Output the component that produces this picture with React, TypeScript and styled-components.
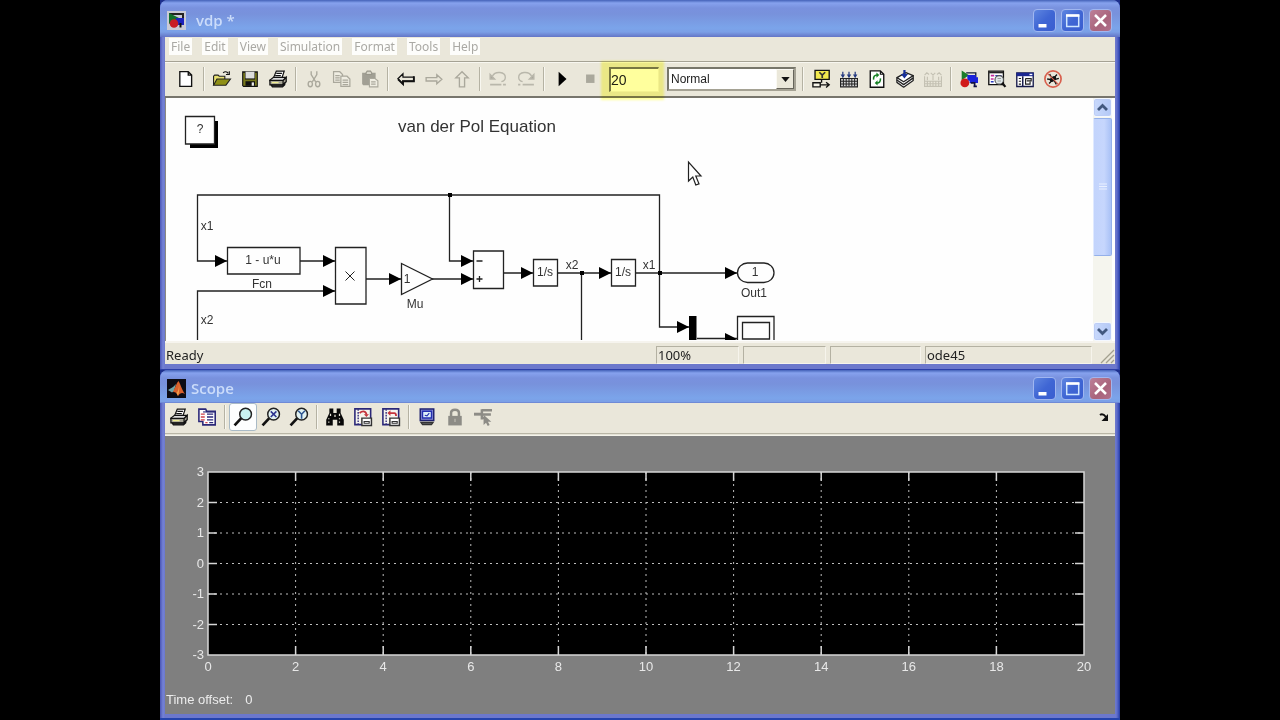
import React from "react";
import styled, { createGlobalStyle, css } from "styled-components";

const ui = `"Noto Sans", "Open Sans", sans-serif`;
const arial = `"Liberation Sans", Arial, sans-serif`;

const Global = createGlobalStyle`
  * { box-sizing: border-box; }
  body { margin: 0; background: #000; font-family: ${ui}; font-size: 12px; color: #222; }
  button, input, select { font: inherit; color: inherit; margin: 0; }
`;

const Desktop = styled.main`
  width: 75%;
  min-height: 100vh;
  margin: 0 auto;
  display: flex;
  flex-direction: column;
  background: #1c2f8c;
`;

const Frame = styled.section<{ $grow?: boolean }>`
  display: flex;
  flex-direction: column;
  padding: 0 5px 5px;
  border-radius: 8px 8px 0 0;
  background: linear-gradient(90deg, #4a55b4 0, #7482d6 3px, #6c78cc 5px, #6c78cc calc(100% - 4px), #4a5cc4 calc(100% - 2px), #22399c 100%);
  border-bottom: 1px solid #2c3fa8;
  ${(p) => p.$grow && css`flex: 1; padding-bottom: 4px; border-bottom: 3px solid #2443ac;`}
`;

const TitleBar = styled.header<{ $h: number; $gap: number }>`
  height: ${(p) => p.$h}px;
  margin: 0 -5px;
  padding: 3px 8px 0 7px;
  display: flex;
  align-items: center;
  gap: ${(p) => p.$gap}px;
  border-radius: 8px 8px 0 0;
  background: linear-gradient(180deg, #4462b8 0, #86a2ee 3px, #7991de 8px, #7892dc 14px, #7ba4ea 28px, #7b9fe6 32px, #6375c6 100%);
`;

const AppMark = styled.svg`
  width: 19px;
  height: 19px;
  flex: none;
`;

const Title = styled.h1`
  flex: 1;
  margin: 0;
  font: 600 15px/20px "Open Sans", ${ui};
  color: #cbdcfa;
`;

const WindowButtons = styled.div`
  display: flex;
  gap: 5px;
`;

const WindowButton = styled.button<{ $close?: boolean }>`
  width: 23px;
  height: 23px;
  padding: 0;
  display: grid;
  place-items: center;
  border: 1px solid #a0b6f0;
  border-radius: 4px;
  background: ${(p) =>
    p.$close
      ? "linear-gradient(135deg, #bd8098, #a9647c 60%, #b0708c)"
      : "linear-gradient(135deg, #5f86e0, #3f66d4 50%, #3a5ed0)"};
  svg { width: 21px; height: 21px; }
`;

const MenuBar = styled.nav`
  height: 24px;
  padding: 1px 4px 0;
  display: flex;
  align-items: flex-start;
  gap: 10px;
  background: #eae7da;
`;

const MenuItem = styled.button`
  height: 17px;
  padding: 0 2px;
  border: 0;
  background: #fdfdfb;
  color: #aaa9a4;
  font-size: 12px;
  line-height: 17px;
`;

const ToolBar = styled.div<{ $h: number; $pad: number }>`
  height: ${(p) => p.$h}px;
  padding: 0 ${(p) => p.$pad}px;
  display: flex;
  align-items: center;
  background: #eae7da;
`;

const ModelTools = styled(ToolBar)`
  border-top: 1px solid #a5a294;
  border-bottom: 2px solid #77756c;
  box-shadow: inset 0 1px 0 #f8f7f0;
`;

const ScopeTools = styled(ToolBar)`
  padding-bottom: 4px;
  border-bottom: 1px solid #f4f3ea;
  box-shadow: inset 0 -1px 0 #e4e2d6, inset 0 -2px 0 #b9b6a6;
`;

const ToolButton = styled.button<{ $pressed?: boolean }>`
  width: 28px;
  height: 28px;
  flex: none;
  padding: 0;
  display: grid;
  place-items: center;
  border: 0;
  background: none;
  svg { width: 18px; height: 18px; overflow: visible; }
  ${(p) =>
    p.$pressed &&
    css`
      background: #fdfefe;
      border: 1px solid #a9bac6;
      border-radius: 3px;
    `}
`;

const Separator = styled.span`
  width: 2px;
  height: 24px;
  flex: none;
  margin: 0 3px;
  border-left: 1px solid #b5b2a3;
  border-right: 1px solid #f8f7f0;
`;

const Spacer = styled.span`
  flex: 1;
`;

const StopTime = styled.label`
  position: relative;
  margin: 0 8px 0 5px;
  display: block;
  &::after {
    content: "";
    position: absolute;
    inset: -6px -5px -8px -8px;
    background: rgba(255, 255, 60, 0.5);
    mix-blend-mode: multiply;
    pointer-events: none;
    filter: blur(1px);
  }
`;

const StopInput = styled.input`
  display: block;
  width: 50px;
  height: 25px;
  padding: 0;
  border: 2px solid #77766a;
  border-right: 1px solid #f4f2e8;
  border-bottom: 1px solid #f4f2e8;
  background: #fff;
  font-family: ${arial};
  font-size: 14px;
`;

const ModeField = styled.label`
  position: relative;
  display: block;
  margin-right: 3px;
`;

const ModeSelect = styled.select`
  display: block;
  width: 129px;
  height: 24px;
  padding: 0 2px;
  appearance: none;
  border: 2px solid #77766a;
  border-right-color: #a5a294;
  border-bottom-color: #a5a294;
  border-radius: 0;
  background: #fff;
  font-family: ${arial};
  font-size: 12px;
`;

const SelectArrow = styled.span`
  position: absolute;
  top: 2px;
  right: 2px;
  bottom: 2px;
  width: 18px;
  display: grid;
  place-items: center;
  background: #ebe8da;
  border: 1px solid #fbfaf4;
  border-right-color: #66645a;
  border-bottom-color: #66645a;
  pointer-events: none;
  svg { width: 9px; height: 5px; }
`;

const Canvas = styled.div`
  display: flex;
  justify-content: space-between;
  height: 243px;
  overflow: hidden;
  background: #fefefe;
  border-left: 1px solid #8c8a80;
`;

const Diagram = styled.svg`
  width: 640px;
  height: 242px;
  flex: none;
  font-family: ${arial};
  font-size: 12px;
  stroke: none;
  fill: #333;
`;

const ScrollTrack = styled.div`
  width: 19px;
  margin-right: 3px;
  display: flex;
  flex-direction: column;
  background: #f5f5ee;
`;

const ScrollButton = styled.button`
  height: 19px;
  flex: none;
  padding: 0;
  display: grid;
  place-items: center;
  border: 1px solid #f4f8ff;
  border-radius: 3px;
  background: linear-gradient(90deg, #c9d9fc, #b3c8f6);
  box-shadow: inset 0 0 0 1px #bccdf6;
  svg { width: 13px; height: 9px; }
`;

const ScrollThumb = styled.div`
  height: 138px;
  margin: 1px 0 auto;
  display: grid;
  place-items: center;
  border: 1px solid #94b0ea;
  border-left-color: #dfe9ff;
  border-radius: 2px;
  background: linear-gradient(90deg, #c3d4fc, #c6d6fd 60%, #a9c1f6);
  svg { width: 8px; height: 8px; }
`;

const StatusBar = styled.footer`
  height: 23px;
  display: flex;
  align-items: stretch;
  gap: 4px;
  background: #eae7da;
  border-top: 2px solid #f6f4ee;
  font-size: 13px;
  line-height: 24px;
`;

const StatusText = styled.span`
  flex: 1;
  padding-left: 1px;
`;

const StatusPanel = styled.span<{ $w: number }>`
  width: ${(p) => p.$w}px;
  margin-top: 3px;
  padding-left: 1px;
  line-height: 16px;
  border: 1px solid #b4b1a2;
  border-right-color: #f6f4ec;
  border-bottom-color: #f6f4ec;
`;

const Grip = styled.svg`
  width: 19px;
  height: 21px;
`;

const ScopeBody = styled.div`
  flex: 1;
  display: flex;
  flex-direction: column;
  padding: 36px 31px 0 43px;
  background: #7f7f7f;
`;

const Plot = styled.svg`
  display: block;
  width: 100%;
  flex: 1;
  min-height: 183px;
  overflow: visible;
  font-family: ${arial};
  font-size: 13px;
  fill: #e8e8e8;
`;

const TimeOffset = styled.p`
  margin: 36px 0 0 -42px;
  padding-bottom: 6px;
  display: flex;
  gap: 12px;
  font-family: ${arial};
  font-size: 13px;
  line-height: 17px;
  color: #ececec;
`;

const ExpandArrow = styled.button`
  width: 18px;
  height: 18px;
  padding: 0;
  border: 0;
  background: none;
  svg { display: block; width: 18px; height: 18px; }
`;

const GREY = "#aaa89c";

const icons: Record<string, React.ReactNode> = {
  new: <path d="M2.500 1.500h7.500l3 3v10H2.500z M10 1.500v3h3" fill="#fff" stroke="#111" strokeWidth="1.200" />,
  open: (
    <g strokeWidth="1">
      <path d="M.5 13.500V5.500l1-1h3l1 1h5v3" fill="#e8e070" stroke="#222" />
      <path d="M.5 13.500l3-5.500h12l-4 5.500z" fill="#8f9016" stroke="#222" />
      <path d="M9 2.500c1.500-1.500 3.500-1.200 4.500.5M14.500 1v3h-3" fill="none" stroke="#111" />
    </g>
  ),
  save: (
    <g>
      <path d="M1 1h14v14H2l-1-1z" fill="#111" />
      <path d="M2 2.500h1.500v6h9v-6H14V14H2z" fill="#77781c" />
      <path d="M4 1.500h8v6H4z" fill="#ddd" />
      <path d="M4 10h8.500v4H4z" fill="#111" />
      <path d="M9.500 11h2v3h-2z" fill="#eee" />
    </g>
  ),
  print: (
    <g stroke="#111" strokeWidth="1.100">
      <path d="M4 7l2.500-6h7L11.500 7z" fill="#fff" />
      <path d="M6.500 3h5M5.500 5h5" fill="none" />
      <path d="M.8 9L4 6.500h11L12.500 9.500H.8z" fill="#ddd" />
      <path d="M.8 9.200h11.700v4H.8zM12.500 9.500L15.300 6.500v4l-2.800 2.700z" fill="#a7a596" />
      <path d="M2 13.500h10l2-2v1.500l-2 2H3z" fill="#555" />
      <path d="M2.500 11.200h6" stroke="#f0ee90" />
    </g>
  ),
  cut: (
    <g fill="none" stroke={GREY} strokeWidth="1.200">
      <path d="M5.500 1v3l4 6.500M10.500 1v3l-4 6.500" />
      <ellipse cx="4.700" cy="12.500" rx="1.900" ry="2.400" />
      <ellipse cx="11.300" cy="12.500" rx="1.900" ry="2.400" />
    </g>
  ),
  copy: (
    <g fill="#efede2" stroke={GREY} strokeWidth="1.100">
      <path d="M.5 1.500h5.500l2.500 2.500v7H.5z" />
      <path d="M2 5h4M2 7h4M2 9h4" />
      <path d="M7 5.500h5.500l2.500 2.500v6.500H7z" />
      <path d="M8.500 9h5M8.500 11h5M8.500 13h5" />
    </g>
  ),
  paste: (
    <g>
      <path d="M1 2.500h12v11H2l-1-1z" fill="#a19f94" />
      <path d="M4.500 2.500l1-1.500h3l1 1.500v1.500h-5z" fill="#d8d6ca" stroke="#98968a" />
      <path d="M7.500 7.500h5l2.500 2v5.500H7.500z" fill="#efede2" stroke={GREY} />
      <path d="M9 10.500h4M9 12.500h4" stroke={GREY} />
    </g>
  ),
  back: (
    <g fill="none" stroke="#111">
      <path d="M.8 7.800L5.300 3.300V6.300H14.800V9.800H5.300V12.300z" strokeWidth="1.100" />
      <path d="M1 8.300l4.300 4.200V10H15V5.500" strokeWidth="1.700" />
    </g>
  ),
  forward: <path d="M15 8.300l-4.500-4v2.500H1v3h9.500v2.500z" fill="none" stroke={GREY} strokeWidth="1.200" />,
  up: <path d="M8 1.500L2.500 7h3.200v8h4.600V7h3.200z" fill="none" stroke={GREY} strokeWidth="1.200" />,
  undo: (
    <g fill="none" stroke="#b9b7ab" strokeWidth="1.200">
      <path d="M3 5.500c2.500-5 11.500-4 11.500 1 0 2.200-1.500 3.500-3.500 3.800" />
      <path d="M1 4v4h4z" fill={GREY} />
      <path d="M1 13h10M12.500 13h2.500" strokeWidth="1.500" />
    </g>
  ),
  redo: (
    <g fill="none" stroke="#b9b7ab" strokeWidth="1.200">
      <path d="M13 5.500C10.500.5 1.500 1.500 1.500 6.500c0 2.200 1.500 3.500 3.500 3.800" />
      <path d="M15 4v4h-4z" fill={GREY} />
      <path d="M1 13h2M5 13h10" strokeWidth="1.500" />
    </g>
  ),
  play: <path d="M5 1.500L12 8 5 14.500z" fill="#000" />,
  stop: <path d="M4.500 4h7.500v7.500H4.500z" fill={GREY} />,
  signal: (
    <g stroke="#111" strokeWidth="1.200">
      <path d="M2.700 .3h12.600v8H2.700z" fill="#f2e94e" />
      <path d="M6.500 2l2.600 2.500L11.700 2M9.100 4.500v2.700" fill="none" stroke="#333" strokeWidth="1.500" />
      <path d="M.8 11.300h6.500v3.700H.8z" fill="#f5f3e8" />
      <path d="M7.300 13.200h7.500M8.500 8.500v2.800M12.500 10.800L15.300 13.200l-2.800 2.300" fill="none" />
    </g>
  ),
  grid: (
    <g stroke="#222" fill="none">
      <path d="M.5 7.500h15v7.500H.5z" fill="#d5d5d5" />
      <path d="M.5 10h15M.5 12.500h15M3 7.500v7M5.500 7.500v7M8 7.500v7M10.500 7.500v7M13 7.500v7" strokeWidth=".9" />
      <path d="M2.500 1.500v5M8 1.500v5M13.500 1.500v5" stroke="#263b80" strokeWidth="1.100" />
      <path d="M.5 4h4L2.500 7zM6 4h4L8 7zM11.500 4h4L13.500 7z" fill="#263b80" stroke="none" />
    </g>
  ),
  refresh: (
    <g>
      <path d="M2 .8h9l3 3v11.500H2z" fill="#fff" stroke="#111" strokeWidth="1.200" />
      <path d="M11 .8v3h3" fill="none" stroke="#111" />
      <path d="M5 8.500c-.4-2.500.8-4 3-4M11 7.500c.4 2.500-.8 4-3 4" fill="none" stroke="#158022" strokeWidth="1.400" />
      <path d="M7.500 2.200v4.600L10 4.500zM8.500 9.200v4.600L6 11.500z" fill="#158022" />
    </g>
  ),
  layers: (
    <g stroke="#222" strokeWidth="1.100" strokeLinejoin="round">
      <path d="M.8 11l6 4.300 8.500-6V7.500L.8 9z" fill="#fff" />
      <path d="M.8 8.800l6 4.200 8.500-6V5L.8 7z" fill="#fff" />
      <path d="M.8 6.800l8-4.500L15.300 5 6.800 10.500z" fill="#fff" />
      <path d="M7.500 0v4" stroke="#18309a" strokeWidth="2" />
      <path d="M4.300 3.500h6.400L7.500 7.500z" fill="#18309a" stroke="none" />
    </g>
  ),
  gridOff: (
    <g stroke="#c4c1b3" fill="none">
      <path d="M.5 4.500l2-2 2 1.500M6 2.500l2 2 2-2M11.500 4l2-1.500 2 2M3 6v3M8 5v4M13 6v3" />
      <path d="M.5 5.500v9h15v-9M.5 10h15M.5 12.200h15M3 9.500v5M5.500 9.500v5M8 9.500v5M10.500 9.500v5M13 9.500v5" />
    </g>
  ),
  library: (
    <g>
      <path d="M5.500 2.500H14v5" fill="none" stroke="#14203a" strokeWidth="1.200" />
      <path d="M1.500 .5l6.500 4.200-6.500 4.300z" fill="#1b7d2b" />
      <path d="M6.500 4.500h7.500V6.500h2v5H8.500V9.500h-2z" fill="#1a22dc" />
      <circle cx="4.300" cy="11.500" r="3.900" fill="#d01a1a" />
      <path d="M9.500 11.500h3.500v3.500M12 14.500h3" fill="none" stroke="#114" strokeWidth="1.500" />
    </g>
  ),
  explorer: (
    <g fill="none">
      <path d="M.7 1h13v12H.7z" fill="#fff" stroke="#111" strokeWidth="1.200" />
      <path d="M1 2.200h12.500" stroke="#222" strokeWidth="1.500" />
      <path d="M2.500 5h3M2.500 8h2.500" stroke="#c22c9c" strokeWidth="1.500" />
      <path d="M6.500 5h5.500M2.500 10.500h2.500" stroke="#2c3dc0" strokeWidth="1.300" />
      <circle cx="10" cy="8.800" r="3.800" fill="#dfe9ea" stroke="#555" />
      <path d="M8.500 7.500h3M8.500 9.800h3" stroke="#999" />
      <path d="M12.600 11.600l2.900 3.400" stroke="#111" strokeWidth="2" />
    </g>
  ),
  browser: (
    <g fill="none">
      <path d="M.7 2.700h14.600v12H.7z" fill="#fff" stroke="#161a4a" strokeWidth="1.200" />
      <path d="M.5 2.500h15v3H.5z" fill="#1b2792" />
      <path d="M12 4h2.500" stroke="#fff" strokeWidth="1.200" />
      <path d="M6 5.500v9" stroke="#161a4a" strokeWidth="1.300" />
      <path d="M2.500 7.500h2M2.500 10h2M2.500 12.500h2M8.500 7.500v5.500M8.500 7.700h5v2h-4M9 12.500h3.500v-2" stroke="#222" />
    </g>
  ),
  debug: (
    <g fill="none">
      <path d="M5 3.500l1.500 3M11.500 4l-2.500 3M2.800 8l4 .5M13.200 7.500l-4 1M4.500 12l3-3M11 12.800l-2-3.500" stroke="#111" strokeWidth="1.200" />
      <ellipse cx="8" cy="8" rx="2" ry="3.200" fill="#111" transform="rotate(50 8 8)" />
      <circle cx="8" cy="8" r="7.200" stroke="#d8604e" strokeWidth="1.500" />
      <path d="M3 3l10 10" stroke="#d8604e" strokeWidth="1" />
    </g>
  ),
  params: (
    <g fill="none">
      <path d="M.8 1h6l1 2h7.500v12h-11V12h-3.500z" fill="#fff" stroke="#2b2878" strokeWidth="1.400" />
      <path d="M4.500 3.500h10.500" stroke="#2b2878" />
      <path d="M2.500 5.500h3.500M2.500 8h3.500M2.500 10.500h3.500M6.500 13h2" stroke="#d0424a" strokeWidth="1.200" />
      <path d="M8 5.500h5.500M8 8h5.500M8 10.500h5.500M10 13h3.500" stroke="#2b2878" strokeWidth="1.200" />
    </g>
  ),
  zoom: (
    <g>
      <path d="M6.500 9L.5 15.500" stroke="#111" strokeWidth="2.400" />
      <circle cx="10.300" cy="5.500" r="5.200" fill="#c9f2f0" stroke="#222" strokeWidth="1.300" />
    </g>
  ),
  zoomX: (
    <g>
      <path d="M6.500 9L.5 15.500" stroke="#111" strokeWidth="2.400" />
      <circle cx="10.300" cy="5.500" r="5.200" fill="#e2f2f2" stroke="#222" strokeWidth="1.300" />
      <path d="M7.800 3l5 5M12.800 3l-5 5" stroke="#2c3490" strokeWidth="1.400" />
    </g>
  ),
  zoomY: (
    <g>
      <path d="M6.500 9L.5 15.500" stroke="#111" strokeWidth="2.400" />
      <circle cx="10.300" cy="5.500" r="5.200" fill="#e2f2f2" stroke="#222" strokeWidth="1.300" />
      <path d="M7.300 2.500l3 3 3-3M10.300 5.500v4" stroke="#2c5490" fill="none" strokeWidth="1.400" />
    </g>
  ),
  binoculars: (
    <g fill="#080808">
      <path d="M3 .5h3.500v4h3v-4H13v4l2.800 6v5H10v-5H6v5H.2v-5L3 4.500z" />
      <path d="M4 5v2M2.500 9v1M2.500 12v1M12 5v2M12 9v1M12 12v1M8 6v2" stroke="#e8e6da" strokeWidth="1.100" />
    </g>
  ),
  saveAxes: (
    <g fill="none">
      <path d="M.8 .8h14v14H.8z" fill="#f6f5ee" stroke="#2b2878" strokeWidth="1.400" />
      <path d="M3.700 1v14" stroke="#2b2878" strokeWidth="1.200" strokeDasharray="1.500 1" />
      <path d="M5 4.500c3-2.500 6-1.500 6 1.500" stroke="#c4343c" strokeWidth="1.600" />
      <path d="M8.800 5.500h4.500L11 8z" fill="#c4343c" />
      <path d="M7 9h8.500v6.500H7z" fill="#fff" stroke="#333" strokeWidth="1.300" />
      <path d="M9 12h4.500v1.500H9z" stroke="#333" />
    </g>
  ),
  restoreAxes: (
    <g fill="none">
      <path d="M.8 .8h14v14H.8z" fill="#f6f5ee" stroke="#2b2878" strokeWidth="1.400" />
      <path d="M3.700 1v14" stroke="#2b2878" strokeWidth="1.200" strokeDasharray="1.500 1" />
      <path d="M6.500 4.500H11c1.500 0 1.500 1 1.500 2.500" stroke="#c4343c" strokeWidth="1.600" />
      <path d="M7.500 2v5L4.800 4.500z" fill="#c4343c" />
      <path d="M7 9h8.500v6.500H7z" fill="#fff" stroke="#333" strokeWidth="1.300" />
      <path d="M9 12h4.500v1.500H9z" stroke="#333" />
    </g>
  ),
  floating: (
    <g fill="none">
      <path d="M2 .8h12v10.400H2z" fill="#8c90d8" stroke="#1f2270" strokeWidth="1.300" />
      <path d="M4 2.800h8v6H4z" fill="#dff0fa" stroke="#2430b0" strokeWidth="1.300" />
      <path d="M6 6.500l2 .5 2-2.500" stroke="#2430b0" />
      <path d="M2.500 12.800h11l-1.500 2h-8z" fill="#555" stroke="#333" />
    </g>
  ),
  lock: (
    <g fill="none">
      <path d="M4.500 8V4.500c0-4 7-4 7 0V8" stroke="#8d8c86" strokeWidth="2.200" />
      <path d="M2 7h12v8.500H2z" fill="#8d8c86" />
      <path d="M8 9.500v3" stroke="#b5b3aa" strokeWidth="1.300" />
    </g>
  ),
  select: (
    <g fill="none" stroke="#8d8c86">
      <path d="M0 5.500h7" strokeWidth="2.600" />
      <path d="M7 1.200v9M7 2h9M8 5.700h7M7 9h3" strokeWidth="2.200" />
      <path d="M8.500 6v9l2.200-2 1.500 3 1.700-1-1.500-2.700h3z" fill="#8d8c86" stroke="none" />
    </g>
  ),
};

function Tool({ icon, label, pressed }: { icon: string; label: string; pressed?: boolean }) {
  return (
    <ToolButton type="button" aria-label={label} $pressed={pressed}>
      <svg viewBox="0 0 16 16" aria-hidden="true">{icons[icon]}</svg>
    </ToolButton>
  );
}

function ToolGroups({ groups, pressed }: { groups: [string, string][][]; pressed?: string }) {
  return (
    <>
      {groups.map((group, i) => (
        <React.Fragment key={i}>
          {i > 0 && <Separator />}
          {group.map(([icon, label]) => (
            <Tool key={icon} icon={icon} label={label} pressed={icon === pressed} />
          ))}
        </React.Fragment>
      ))}
    </>
  );
}

function WindowControls() {
  return (
    <WindowButtons>
      <WindowButton type="button" aria-label="Minimize">
        <svg viewBox="0 0 21 21"><path d="M4.500 14h8v3.500h-8z" fill="#fff" /></svg>
      </WindowButton>
      <WindowButton type="button" aria-label="Maximize">
        <svg viewBox="0 0 21 21">
          <path d="M4.700 5.500h12v11h-12z" fill="none" stroke="#cfe6ff" strokeWidth="1.500" />
          <path d="M4 5.500h13.400" stroke="#fff" strokeWidth="2.600" />
        </svg>
      </WindowButton>
      <WindowButton type="button" aria-label="Close" $close>
        <svg viewBox="0 0 21 21"><path d="M5 5l11 11M16 5L5 16" stroke="#fff" strokeWidth="2.500" /></svg>
      </WindowButton>
    </WindowButtons>
  );
}

/* Filled arrowhead pointing right, with its tip at (x, y). */
const Head = ({ x, y }: { x: number; y: number }) => (
  <path d={`M${x} ${y}l-12 -6v12z`} fill="#000" />
);

function Model() {
  return (
    <Diagram viewBox="166 98 640 242" role="img" aria-label="van der Pol model">
      <path d="M190 121h28v27h-28z" fill="#000" />
      <g fill="none" stroke="#222" strokeWidth="1.300">
        <path d="M185.500 116.500h29v27.500h-29z" fill="#fff" />
        <path d="M227 261H197.500V195H659.500V327H689M449.500 195V261H473M197.500 342V291H335" />
        <path d="M300 261H335M366 279H401M432 279H473M504 273H533M558 273H611M636 273H737M581.500 273V342M697 338.500H737" />
        <path d="M227.500 247.500h72.500v26.500h-72.500zM335.500 247.500h30.500v56.500h-30.500zM401.500 263.500L432.500 279 401.500 294.500z" />
        <path d="M473.500 251h30v37.500h-30zM533.500 259.500h24v26.500h-24zM611.500 259.500h24v26.500h-24z" />
        <rect x="737.500" y="263" width="36.500" height="19.500" rx="10" />
        <path d="M737.500 345V316.500h36.500V345M742.500 322.500h27v16.500h-27z" />
        <path d="M345.500 271.500l9 9M354.500 271.500l-9 9" strokeWidth="1" />
        <path d="M476.500 261h6M476.500 279h6M479.500 276v6" />
      </g>
      <path d="M689 316h7.500v26H689z" fill="#000" />
      <Head x={227} y={261} />
      <Head x={335} y={261} />
      <Head x={335} y={291} />
      <Head x={401} y={279} />
      <Head x={473} y={261} />
      <Head x={473} y={279} />
      <Head x={533} y={273} />
      <Head x={611} y={273} />
      <Head x={737} y={273} />
      <Head x={689} y={327} />
      <Head x={737} y={339} />
      <path d="M448 193h4v4h-4zM580 271h4v4h-4zM658 271h4v4h-4z" fill="#000" />
      <text x="398" y="132" fontSize="17">van der Pol Equation</text>
      <g textAnchor="middle">
        <text x="200" y="133">?</text>
        <text x="263" y="264">1 - u*u</text>
        <text x="262" y="288">Fcn</text>
        <text x="407" y="283">1</text>
        <text x="415" y="308">Mu</text>
        <text x="545" y="276">1/s</text>
        <text x="623" y="276">1/s</text>
        <text x="755" y="276">1</text>
        <text x="754" y="297">Out1</text>
        <text x="572" y="269">x2</text>
        <text x="649" y="269">x1</text>
        <text x="207" y="230">x1</text>
        <text x="207" y="324">x2</text>
      </g>
      <path d="M688.500 162v19l4.300-4 3 8 3.200-1.200-3.200-7.800h5.200z" fill="#fff" stroke="#222" strokeWidth="1.200" />
    </Diagram>
  );
}

const xTicks = [0, 2, 4, 6, 8, 10, 12, 14, 16, 18, 20];
const yTicks = [3, 2, 1, 0, -1, -2, -3];

function ScopePlot() {
  return (
    <Plot role="img" aria-label="Scope axes">
      <rect width="100%" height="100%" fill="#000" />
      <g stroke="#bdbdbd" strokeWidth="1" strokeDasharray="2 4">
        {xTicks.slice(1, -1).map((t) => (
          <line key={t} x1={`${t * 5}%`} x2={`${t * 5}%`} y1="0" y2="100%" />
        ))}
        {yTicks.slice(1, -1).map((t) => {
          const y = `${((3 - t) / 6) * 100}%`;
          return <line key={t} x1="0" x2="100%" y1={y} y2={y} />;
        })}
      </g>
      <g stroke="#d6d6d6" strokeWidth="1.500">
        <rect width="100%" height="100%" fill="none" />
        {xTicks.slice(1, -1).map((t) => (
          <React.Fragment key={t}>
            <line x1={`${t * 5}%`} x2={`${t * 5}%`} y1="0" y2="9" />
            <svg y="100%" overflow="visible">
              <line x1={`${t * 5}%`} x2={`${t * 5}%`} y1="-9" y2="0" />
            </svg>
          </React.Fragment>
        ))}
        {yTicks.slice(1, -1).map((t) => {
          const y = `${((3 - t) / 6) * 100}%`;
          return (
            <React.Fragment key={t}>
              <line x1="0" x2="9" y1={y} y2={y} />
              <svg x="100%" overflow="visible">
                <line x1="-9" x2="0" y1={y} y2={y} />
              </svg>
            </React.Fragment>
          );
        })}
      </g>
      {xTicks.map((t) => (
        <text key={t} x={`${t * 5}%`} y="100%" dy="16" textAnchor="middle">{t}</text>
      ))}
      {yTicks.map((t) => (
        <text key={t} x="-4" y={`${((3 - t) / 6) * 100}%`} dy="4" textAnchor="end">{t}</text>
      ))}
    </Plot>
  );
}

const menus = ["File", "Edit", "View", "Simulation", "Format", "Tools", "Help"];

export default function App() {
  return (
    <Desktop>
      <Global />
      <Frame>
        <TitleBar $h={37} $gap={10}>
          <AppMark viewBox="0 0 19 19" aria-hidden="true">
            <path d="M0 0h19v19H0z" fill="#c9cbd6" />
            <path d="M2 3h14v7" fill="none" stroke="#222" strokeWidth="2" />
            <path d="M2 2l10 5-10 6z" fill="#12702c" />
            <path d="M9 7h8v7H9z" fill="#1c22bc" />
            <circle cx="7" cy="12.500" r="4.300" fill="#c81c24" />
            <path d="M13.500 12v4.500" stroke="#111" strokeWidth="2" />
          </AppMark>
          <Title>vdp *</Title>
          <WindowControls />
        </TitleBar>
        <MenuBar>
          {menus.map((m) => (
            <MenuItem key={m} type="button">{m}</MenuItem>
          ))}
        </MenuBar>
        <ModelTools $h={37} $pad={7}>
          <ToolGroups
            groups={[
              [["new", "New"]],
              [["open", "Open"], ["save", "Save"], ["print", "Print"]],
              [["cut", "Cut"], ["copy", "Copy"], ["paste", "Paste"]],
              [["back", "Back"], ["forward", "Forward"], ["up", "Up"]],
              [["undo", "Undo"], ["redo", "Redo"]],
              [["play", "Start simulation"], ["stop", "Stop simulation"]],
            ]}
          />
          <StopTime>
            <StopInput aria-label="Stop time" defaultValue="20" />
          </StopTime>
          <ModeField>
            <ModeSelect aria-label="Simulation mode" defaultValue="Normal">
              <option>Normal</option>
            </ModeSelect>
            <SelectArrow>
              <svg viewBox="0 0 10 6"><path d="M0 0h10L5 6z" fill="#111" /></svg>
            </SelectArrow>
          </ModeField>
          <Separator />
          <ToolGroups
            groups={[
              [
                ["signal", "Port values"],
                ["grid", "Incremental build"],
                ["refresh", "Refresh blocks"],
                ["layers", "Update diagram"],
                ["gridOff", "Build subsystem"],
              ],
              [
                ["library", "Library browser"],
                ["explorer", "Model explorer"],
                ["browser", "Toggle model browser"],
                ["debug", "Debug"],
              ],
            ]}
          />
        </ModelTools>
        <Canvas>
          <Model />
          <ScrollTrack>
            <ScrollButton type="button" aria-label="Scroll up">
              <svg viewBox="0 0 13 9"><path d="M2 7l4.500-4.500L11 7" fill="none" stroke="#42587f" strokeWidth="2.800" /></svg>
            </ScrollButton>
            <ScrollThumb>
              <svg viewBox="0 0 8 8"><path d="M0 1h8M0 3.500h8M0 6h8" stroke="#e9f0ff" /></svg>
            </ScrollThumb>
            <ScrollButton type="button" aria-label="Scroll down">
              <svg viewBox="0 0 13 9"><path d="M2 2l4.500 4.500L11 2" fill="none" stroke="#42587f" strokeWidth="2.800" /></svg>
            </ScrollButton>
          </ScrollTrack>
        </Canvas>
        <StatusBar>
          <StatusText>Ready</StatusText>
          <StatusPanel $w={83}>100%</StatusPanel>
          <StatusPanel $w={83} />
          <StatusPanel $w={91} />
          <StatusPanel $w={167}>ode45</StatusPanel>
          <Grip viewBox="0 0 19 21" aria-hidden="true">
            <path d="M5 20L18 7M10 20l8-8M15 20l3-3" stroke="#a3a08f" strokeWidth="1.300" />
          </Grip>
        </StatusBar>
      </Frame>
      <Frame $grow>
        <TitleBar $h={33} $gap={5}>
          <AppMark viewBox="0 0 19 19" aria-hidden="true">
            <path d="M0 0h19v19H0z" fill="#0c0c14" />
            <path d="M1 11l5-3 3-3-2 7-2 1.500z" fill="#6fa5a8" />
            <path d="M6 13l4-9 1.500-2c2 3 3.500 9 6.500 13-3-2-5-1-7 2-1-2.500-2-4-5-4z" fill="#d8602c" />
            <path d="M11.500 2c1 4 .5 10-2 12l1.500 3c1-3 2-9 .5-15z" fill="#f2a24a" />
          </AppMark>
          <Title as="h2">Scope</Title>
          <WindowControls />
        </TitleBar>
        <ScopeTools $h={33} $pad={0}>
          <ToolGroups
            pressed="zoom"
            groups={[
              [["print", "Print"], ["params", "Parameters"]],
              [["zoom", "Zoom"], ["zoomX", "Zoom X"], ["zoomY", "Zoom Y"]],
              [["binoculars", "Autoscale"], ["saveAxes", "Save axes"], ["restoreAxes", "Restore axes"]],
              [["floating", "Floating scope"], ["lock", "Lock axes"], ["select", "Signal selection"]],
            ]}
          />
          <Spacer />
          <ExpandArrow type="button" aria-label="Dock window">
            <svg viewBox="0 0 18 18"><path d="M3 7c2-1.500 4-.5 6 2" fill="none" stroke="#111" strokeWidth="2" /><path d="M11 6v7H4.500z" fill="#111" /></svg>
          </ExpandArrow>
        </ScopeTools>
        <ScopeBody>
          <ScopePlot />
          <TimeOffset>
            <span>Time offset:</span>
            <span>0</span>
          </TimeOffset>
        </ScopeBody>
      </Frame>
    </Desktop>
  );
}
